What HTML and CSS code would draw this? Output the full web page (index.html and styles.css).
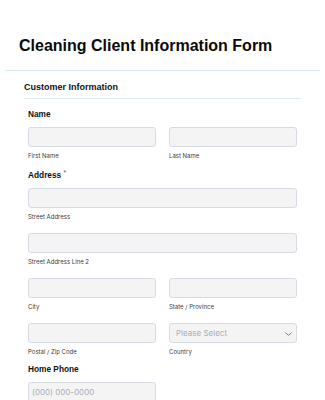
FILE: index.html
```html
<!DOCTYPE html>
<html>
<head>
<meta charset="utf-8">
<link rel="stylesheet" href="styles.css">
</head>
<body>
<div class="page">
  <h1 class="title">Cleaning Client Information Form</h1>
  <div class="sep"></div>
  <div class="section">
    <h2 class="section-title">Customer Information</h2>
    <div class="field">
      <div class="label">Name</div>
      <div class="row">
        <div class="col"><div class="input"></div><div class="sub">First Name</div></div>
        <div class="col"><div class="input"></div><div class="sub">Last Name</div></div>
      </div>
    </div>
    <div class="field">
      <div class="label">Address <span class="req">*</span></div>
      <div class="col"><div class="input"></div><div class="sub">Street Address</div></div>
      <div class="col gap"><div class="input"></div><div class="sub">Street Address Line 2</div></div>
      <div class="row gap">
        <div class="col"><div class="input"></div><div class="sub">City</div></div>
        <div class="col"><div class="input"></div><div class="sub">State / Province</div></div>
      </div>
      <div class="row gap">
        <div class="col"><div class="input"></div><div class="sub">Postal / Zip Code</div></div>
        <div class="col"><div class="input select"><span class="ph">Please Select</span>
          <svg class="chev" width="7" height="4" viewBox="0 0 7 4"><path d="M0.5 0.8 L3.5 3.2 L6.5 0.8" fill="none" stroke="#6b7280" stroke-width="0.9"/></svg></div><div class="sub">Country</div></div>
      </div>
    </div>
    <div class="field">
      <div class="label">Home Phone</div>
      <div class="row">
        <div class="col"><div class="input"><span class="ph">(000) 000-0000</span></div></div>
        <div class="col"></div>
      </div>
    </div>
  </div>
</div>
</body>
</html>
```
FILE: styles.css
```css
* { box-sizing: border-box; }
html, body { margin: 0; padding: 0; background: #fff; }
body { font-family: "Liberation Sans", Arial, sans-serif; color: #111; overflow: hidden; }
.page { padding: 36px 5px 0 5px; }
.title { margin: 0 0 0 14px; font-size: 16px; font-weight: bold; line-height: 20px; color: #0a0a0a; }
.sep { height: 1px; background: #dcebf2; margin-top: 14px; }
.section { padding: 9px 19px 0 19px; }
.section-title { margin: 0; font-size: 9px; font-weight: bold; line-height: 14px; padding-bottom: 4px; border-bottom: 1px solid #dcebf2; color: #111; }
.field { padding: 0 4px 0 4px; margin-top: 9px; }
.field + .field { margin-top: 7px; }
.label { font-size: 8.3px; font-weight: bold; line-height: 12px; margin-bottom: 7px; color: #111; }
.req { font-weight: normal; color: #555; font-size: 6.5px; vertical-align: 3px; }
.row { display: flex; gap: 13px; }
.col { flex: 1; min-width: 0; }
.gap { margin-top: 12px; }
.input { height: 20px; border: 1px solid #d7dbe3; border-radius: 3px; background-color: #f4f4f4;
  background-image: radial-gradient(circle, #e4e4e4 0.6px, transparent 0.7px); background-size: 4px 4px;
  display: flex; align-items: center; padding: 0 3px; position: relative; }
.select { padding-left: 6px; }
.sub { font-family: Inter, "Liberation Sans", sans-serif; font-size: 6px; color: #3d3d3d; margin-top: 4px; line-height: 9px; }
.ph { font-family: Inter, "Liberation Sans", sans-serif; font-size: 8px; color: #a9aeb8; }
.select .chev { position: absolute; right: 4px; top: 8px; }
```
